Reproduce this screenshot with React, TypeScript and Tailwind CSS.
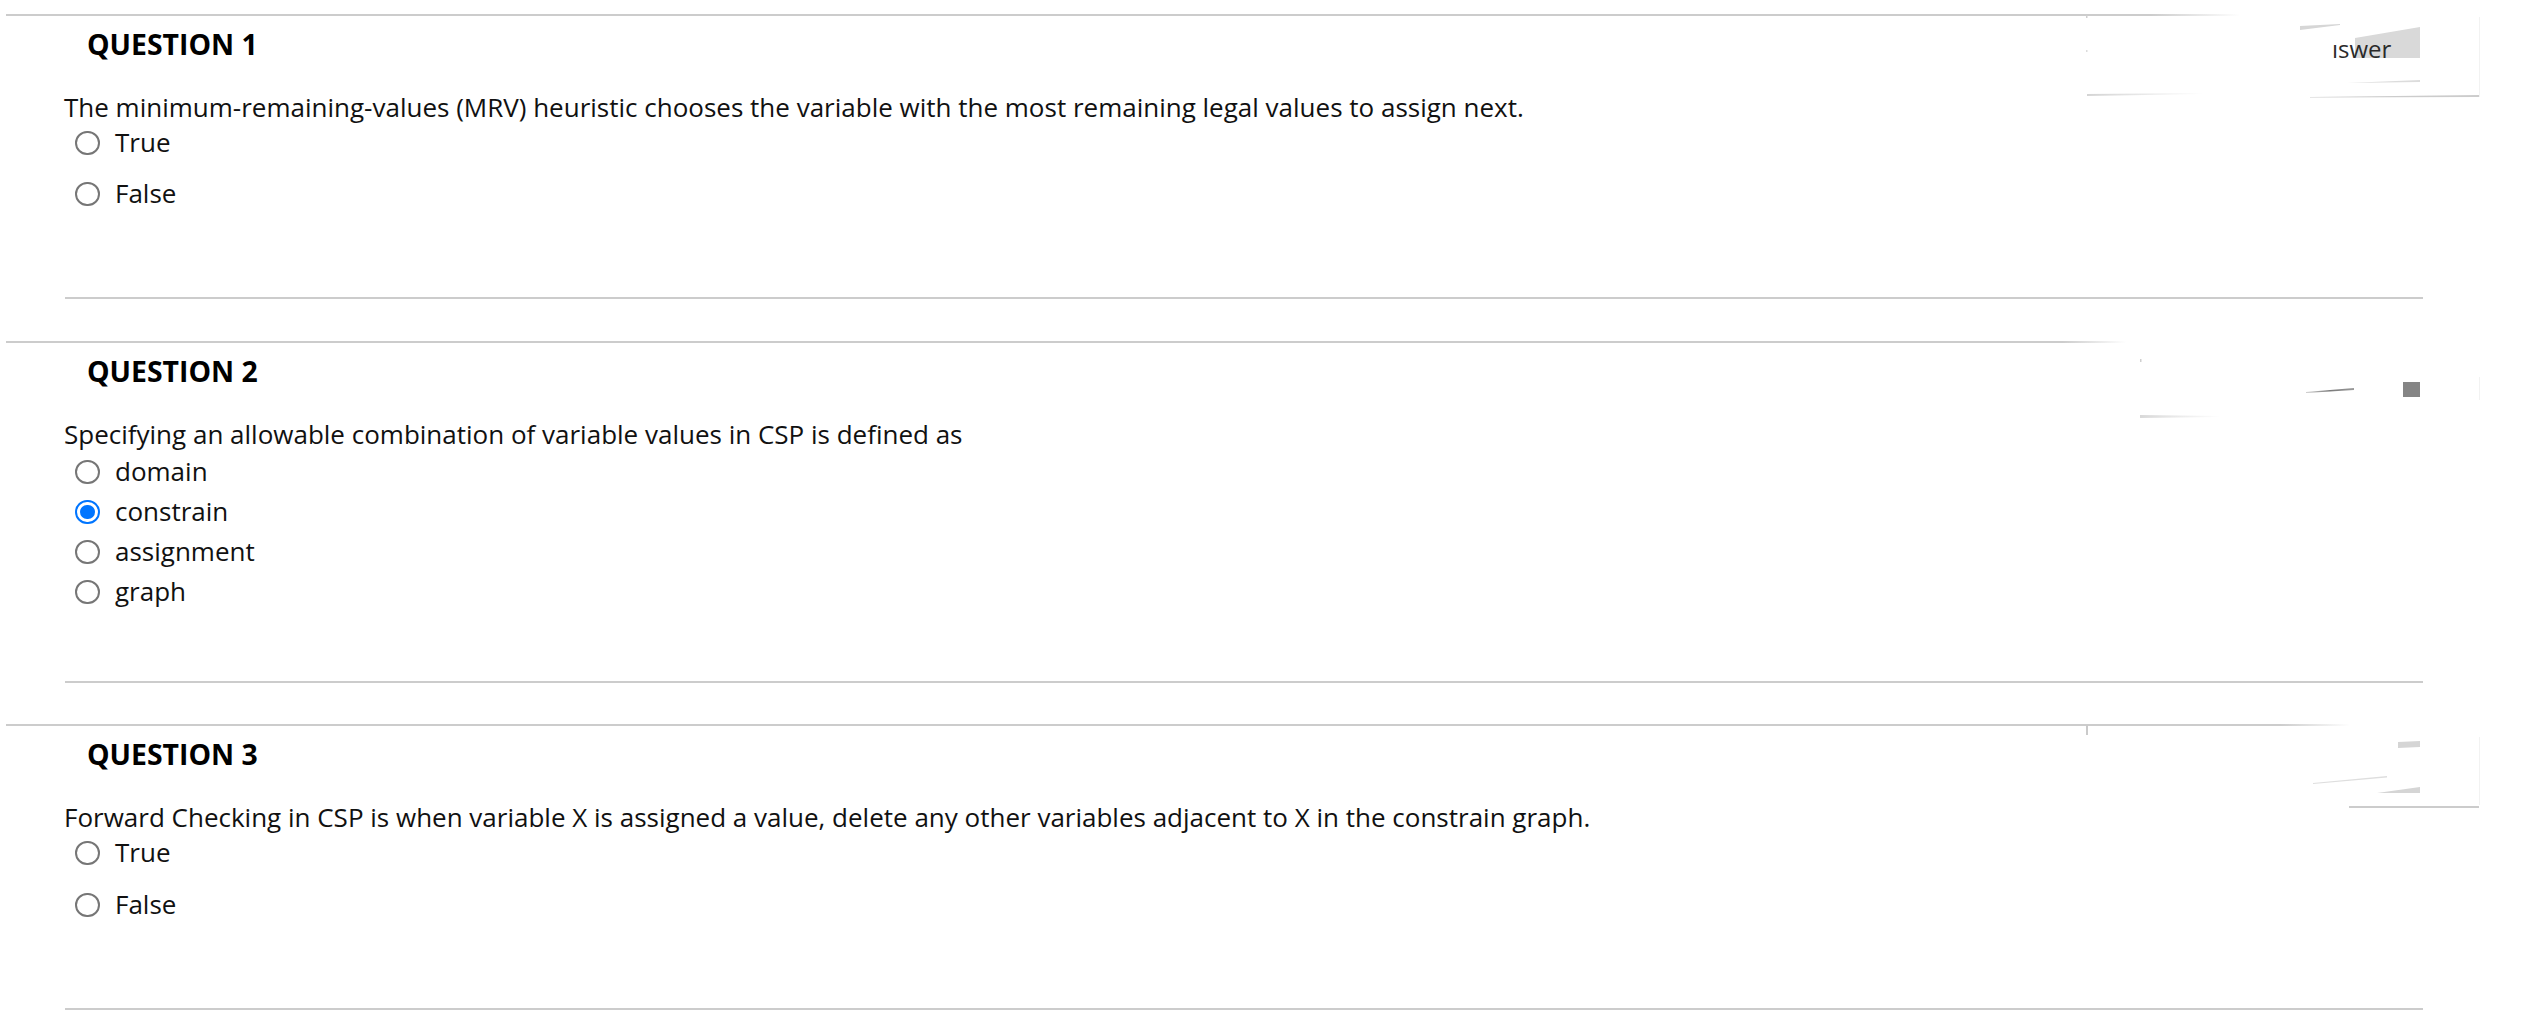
import React from "react";

type Option = { label: string; checked?: boolean };

type Question = {
  n: number;
  text: string;
  options: Option[];
  topLine: string;
  optionsClass: string;
  bottomGap: string;
  gapBefore: string;
  art: React.ReactNode;
};

function Radio({ checked }: { checked?: boolean }) {
  if (checked) {
    return (
      <span className="flex h-[24px] w-[25px] shrink-0 items-center justify-center rounded-full border-2 border-[#0075ff] bg-white">
        <span className="h-[14px] w-[15px] rounded-full bg-[#0075ff]" />
      </span>
    );
  }
  return <span className="h-[24px] w-[25px] shrink-0 rounded-full border-2 border-[#767676] bg-white" />;
}

// leftovers of the broken "Save Answer" box on the right
const artQ1 = (
  <>
    <svg className="absolute left-[2080px] top-0" width="410" height="100" viewBox="0 0 410 100">
      <defs>
        <linearGradient id="fade1" x1="0" x2="1" y1="0" y2="0">
          <stop offset="0" stopColor="#d4d4d4" />
          <stop offset="1" stopColor="#ffffff" />
        </linearGradient>
      </defs>
      <rect x="6" y="1" width="1.5" height="3" fill="#cfcfcf" />
      <rect x="6" y="36" width="1.5" height="2" fill="#dcdcdc" />
      <polygon points="7,80 123,79 123,80 7,82" fill="url(#fade1)" />
      <polygon points="220,12 260,10 260,11 220,16" fill="#d6d6d6" />
      <polygon points="275,24 340,13 340,44 275,44" fill="#d9d9d9" />
      <polygon points="267,69 340,66 340,68 267,69" fill="#dcdcdc" />
      <rect x="399" y="3" width="1" height="80" fill="#f2f2f2" />
      <polygon points="230,83 399,81 399,83 230,83.5" fill="#cccccc" />
    </svg>
    <div className="absolute left-[2332px] top-[23px] text-[24px] leading-[24px] text-[#2a2a2a]">ıswer</div>
  </>
);

const artQ2 = (
  <svg className="absolute left-[2080px] top-0" width="410" height="100" viewBox="0 0 410 100">
    <defs>
      <linearGradient id="fade2" x1="0" x2="1" y1="0" y2="0">
        <stop offset="0" stopColor="#d8d8d8" />
        <stop offset="1" stopColor="#ffffff" />
      </linearGradient>
      <linearGradient id="dark2" x1="0" x2="1" y1="0" y2="0">
        <stop offset="0" stopColor="#cfcfcf" />
        <stop offset="0.5" stopColor="#7a7a7a" />
        <stop offset="1" stopColor="#9a9a9a" />
      </linearGradient>
    </defs>
    <rect x="60" y="18" width="1.5" height="3" fill="#cfcfcf" />
    <polygon points="60,74 140,75 140,76 60,77" fill="url(#fade2)" />
    <polygon points="226,51 274,47 274,49 226,52" fill="url(#dark2)" />
    <rect x="323" y="41" width="17" height="15" fill="#858585" />
    <rect x="399" y="36" width="1" height="23" fill="#f2f2f2" />
  </svg>
);

const artQ3 = (
  <svg className="absolute left-[2080px] top-0" width="410" height="100" viewBox="0 0 410 100">
    <rect x="6" y="1" width="2" height="10" fill="#cacaca" />
    <polygon points="318,18 340,17 340,23 318,24" fill="#d5d5d5" />
    <polygon points="233,59 307,52 307,53.5 233,60" fill="#dedede" />
    <polygon points="297,69 340,63 340,69" fill="#d5d5d5" />
    <rect x="399" y="13" width="1" height="68" fill="#f2f2f2" />
    <rect x="269" y="82" width="130" height="2" fill="#cccccc" />
  </svg>
);

const questions: Question[] = [
  {
    n: 1,
    text: "The minimum-remaining-values (MRV) heuristic chooses the variable with the most remaining legal values to assign next.",
    options: [{ label: "True" }, { label: "False" }],
    topLine: "w-[2234px] bg-[linear-gradient(to_right,#cccccc_96%,#ffffff)]",
    optionsClass: "gap-[16px]",
    bottomGap: "mt-[86px]",
    gapBefore: "pt-[14px]",
    art: artQ1,
  },
  {
    n: 2,
    text: "Specifying an allowable combination of variable values in CSP is defined as",
    options: [
      { label: "domain" },
      { label: "constrain", checked: true },
      { label: "assignment" },
      { label: "graph" },
    ],
    topLine: "w-[2120px] bg-[linear-gradient(to_right,#cccccc_97%,#ffffff)]",
    optionsClass: "gap-[5px] mt-[2px]",
    bottomGap: "mt-[72px]",
    gapBefore: "mt-[42px]",
    art: artQ2,
  },
  {
    n: 3,
    text: "Forward Checking in CSP is when variable X is assigned a value, delete any other variables adjacent to X in the constrain graph.",
    options: [{ label: "True" }, { label: "False" }],
    topLine: "w-[2344px] bg-[linear-gradient(to_right,#cccccc_97%,#ffffff)]",
    optionsClass: "gap-[17px]",
    bottomGap: "mt-[86px]",
    gapBefore: "mt-[41px]",
    art: artQ3,
  },
];

export default function App() {
  return (
    <div className="min-h-[1013px] w-[2526px] overflow-hidden bg-white font-['Open_Sans',sans-serif] text-[#111]">
      <div className="pt-[14px]">
        {questions.map((q, i) => (
          <section key={q.n} className={"relative " + (i === 0 ? "" : q.gapBefore)}>
            <div className={"ml-[6px] h-[2px] " + q.topLine} />
            <h3 className="ml-[87px] mt-[9px] text-[28.4px] font-bold leading-[38px] text-black">QUESTION {q.n}</h3>
            <div className="ml-[64px] mt-[27px]">
              <p className="text-[26px] leading-[35px]">{q.text}</p>
              <div className={"ml-[11px] flex flex-col " + q.optionsClass}>
                {q.options.map((o) => (
                  <label key={o.label} className="flex h-[35px] items-center gap-[15px] text-[26px] leading-[35px]">
                    <Radio checked={o.checked} />
                    <span>{o.label}</span>
                  </label>
                ))}
              </div>
            </div>
            <div className={"ml-[65px] h-[2px] w-[2358px] bg-[#cccccc] " + q.bottomGap} />
            {q.art}
          </section>
        ))}
      </div>
    </div>
  );
}
